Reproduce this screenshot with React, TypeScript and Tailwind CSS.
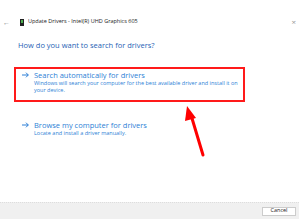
function LinkArrow() {
  return (
    <svg className="mr-[5px] h-[6px] w-[7px]" viewBox="0 0 7 6" fill="none" stroke="#2d7fd6" strokeWidth="1">
      <path d="M0 3H6.3M4 0.7L6.3 3L4 5.3" />
    </svg>
  )
}

export default function App() {
  return (
    <div className="relative flex h-[219px] w-[299px] flex-col overflow-hidden bg-white font-['Open_Sans',sans-serif]">
      <div className="mt-[14px] flex h-[16px] items-center pl-[3px] pr-[3px]">
        <span className="text-[7px] leading-none text-[#888]">←</span>
        <svg className="ml-[10px] h-[7px] w-[4px]" viewBox="0 0 4 7">
          <rect x="0" y="0" width="4" height="7" fill="#222" />
          <rect x="1" y="1" width="2" height="3" fill="#4caf50" />
        </svg>
        <span className="ml-[4px] text-[5.5px] leading-none text-[#222]">Update Drivers - Intel(R) UHD Graphics 605</span>
        <span className="ml-auto text-[8px] leading-none text-[#999]">×</span>
      </div>

      <div className="mt-[10px] pl-[18px] text-[7.5px] leading-[10px] text-[#1f5fb5]">How do you want to search for drivers?</div>

      <div className="ml-[14px] mt-[17px] flex h-[35px] w-[231px] flex-col border-2 border-[#ff1a1a] pl-[6px] pt-[1px]">
        <div className="flex items-center text-[7.5px] leading-[10px] text-[#2d7fd6]">
          <LinkArrow />
          <span>Search automatically for drivers</span>
        </div>
        <div className="pl-[12px] text-[5.5px] leading-[7px] text-[#2d7fd6]">
          Windows will search your computer for the best available driver and install it on your device.
        </div>
      </div>

      <div className="ml-[22px] mt-[18px] flex flex-col">
        <div className="flex items-center text-[7.5px] leading-[10px] text-[#2d7fd6]">
          <LinkArrow />
          <span>Browse my computer for drivers</span>
        </div>
        <div className="pl-[12px] text-[5.5px] leading-[7px] text-[#2d7fd6]">Locate and install a driver manually.</div>
      </div>

      <div className="flex-1" />

      <div className="flex h-[17px] items-center justify-end border-t border-dotted border-[#ddd] bg-[#f0f0f0] pr-[3px]">
        <button className="flex h-[9px] w-[34px] items-center justify-center border border-[#ccc] bg-white text-[5.5px] leading-none text-[#222]">
          Cancel
        </button>
      </div>

      <svg className="absolute left-[180px] top-[101px]" width="30" height="58" viewBox="0 0 30 58">
        <line x1="23" y1="54" x2="11" y2="14" stroke="#ff0000" strokeWidth="3" strokeLinecap="round" />
        <polygon points="7,5 16,17 5,20" fill="#ff0000" />
      </svg>
    </div>
  )
}
